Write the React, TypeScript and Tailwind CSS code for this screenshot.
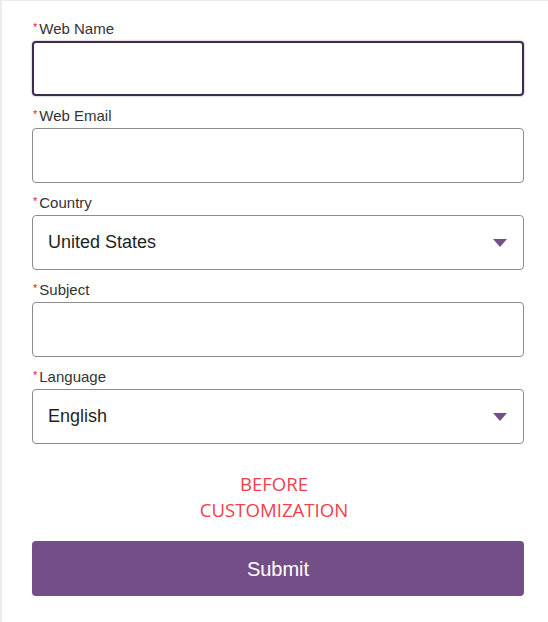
import { useState } from 'react';

const fields = [
  { label: 'Web Name', type: 'text', focused: true },
  { label: 'Web Email', type: 'text' },
  { label: 'Country', type: 'select', value: 'United States' },
  { label: 'Subject', type: 'text' },
  { label: 'Language', type: 'select', value: 'English' },
];

function Caret() {
  return (
    <svg width="14" height="8" viewBox="0 0 14 8" className="shrink-0">
      <path d="M0 0 H14 L7 8 Z" fill="#74508a" />
    </svg>
  );
}

export default function App() {
  const [values, setValues] = useState<Record<string, string>>({});

  return (
    <div className="min-h-[622px] bg-[#ececec] pt-px pl-[2px] font-['Liberation_Sans',Arial,sans-serif]">
      <div className="min-h-[621px] bg-white pl-[30px] pr-[24px] pt-[19px]">
        <form className="flex flex-col gap-[11px]" onSubmit={(e) => e.preventDefault()}>
          {fields.map((f) => (
            <div key={f.label} className="flex flex-col">
              <label className="flex items-center text-[15px] leading-[17px] text-[#333] mb-[4px]">
                <span className="text-[#e5202e] text-[11px] ml-px mr-[2px] -translate-y-[1px]">*</span>
                {f.label}
              </label>
              {f.type === 'select' ? (
                <div className="h-[55px] flex items-center justify-between rounded-[4px] border border-[#8c8c8c] pl-[15px] pr-[16px]">
                  <span className="text-[18px] text-[#1f1f1f]">{f.value}</span>
                  <Caret />
                </div>
              ) : (
                <input
                  value={values[f.label] ?? ''}
                  onChange={(e) => setValues({ ...values, [f.label]: e.target.value })}
                  className={`h-[55px] rounded-[4px] px-[15px] text-[18px] outline-none ${
                    f.focused
                      ? 'border-2 border-[#3d2b4f] shadow-[0_0_2px_rgba(60,40,80,0.5)]'
                      : 'border border-[#8c8c8c]'
                  }`}
                />
              )}
            </div>
          ))}
        </form>
        <p className="mt-[27px] pr-[8px] text-center font-['Open_Sans',sans-serif] font-medium text-[18.6px] leading-[26px] text-[#f0404f]">
          BEFORE
          <br />
          CUSTOMIZATION
        </p>
        <button
          type="submit"
          className="mt-[18px] w-full h-[55px] rounded-[4px] bg-[#744f87] text-white text-[20px]"
        >
          Submit
        </button>
      </div>
    </div>
  );
}
